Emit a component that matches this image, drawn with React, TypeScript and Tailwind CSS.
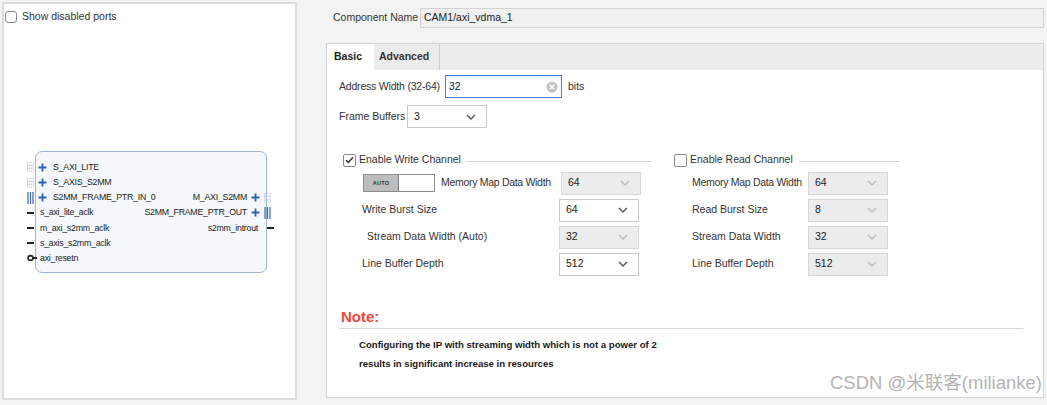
import React from "react";

const Chevron = ({ disabled }: { disabled?: boolean }) => (
  <svg width="10" height="6" viewBox="0 0 10 6" className="shrink-0">
    <path d="M1 1 L5 5 L9 1" fill="none" stroke={disabled ? "#b9b9b9" : "#555"} strokeWidth="1.4" />
  </svg>
);

const Select = ({ value, disabled, w = "w-[80px]" }: { value: string; disabled?: boolean; w?: string }) => (
  <div
    className={`${w} h-[23px] flex items-center justify-between pl-[6px] pr-[10px] border ${
      disabled ? "bg-[#ececec] border-[#d6d6d6]" : "bg-white border-[#c9c9c9]"
    }`}
  >
    <span className="text-[#222]">{value}</span>
    <Chevron disabled={disabled} />
  </div>
);

const Checkbox = ({ checked }: { checked?: boolean }) => (
  <div className="w-[13px] h-[13px] border border-[#8a8a8a] rounded-[2px] bg-white flex items-center justify-center shrink-0">
    {checked && (
      <svg width="9" height="8" viewBox="0 0 9 8">
        <path d="M1 4.2 L3.4 6.5 L8 1.2" fill="none" stroke="#333" strokeWidth="1.5" />
      </svg>
    )}
  </div>
);

const Plus = () => (
  <svg width="9" height="9" viewBox="0 0 9 9" className="shrink-0">
    <path d="M4.5 0.5 V8.5 M0.5 4.5 H8.5" stroke="#2f5fb3" strokeWidth="1.8" />
  </svg>
);

const DotMarker = ({ rows = 3 }: { rows?: number }) => (
  <svg width="7" height="10" viewBox="0 0 7 10">
    {Array.from({ length: rows }).map((_, i) => (
      <g key={i}>
        <rect x="0.5" y={0.5 + i * 3.2} width="6" height="2.4" fill="none" stroke="#a8b6cc" strokeWidth="0.8" strokeDasharray="1 1" />
      </g>
    ))}
  </svg>
);

const BusMarker = () => (
  <svg width="7" height="12" viewBox="0 0 7 12">
    <path d="M1 0 V12 M3.5 0 V12 M6 0 V12" stroke="#3a66b8" strokeWidth="1.2" />
  </svg>
);

const ClockPin = () => <div className="w-[7px] h-[2px] bg-[#222]" />;

const ResetPin = () => (
  <svg width="10" height="8" viewBox="0 0 10 8">
    <path d="M6 4 H10" stroke="#222" strokeWidth="2" />
    <circle cx="3.5" cy="4" r="2.4" fill="white" stroke="#222" strokeWidth="1.6" />
  </svg>
);

type Row = {
  left: string;
  leftBus?: boolean;
  leftPin: React.ReactNode;
  right?: string;
  rightBus?: boolean;
  rightPin?: React.ReactNode;
};

const rows: Row[] = [
  { left: "S_AXI_LITE", leftBus: true, leftPin: <DotMarker rows={3} /> },
  { left: "S_AXIS_S2MM", leftBus: true, leftPin: <DotMarker rows={3} /> },
  {
    left: "S2MM_FRAME_PTR_IN_0",
    leftBus: true,
    leftPin: <BusMarker />,
    right: "M_AXI_S2MM",
    rightBus: true,
    rightPin: <DotMarker rows={3} />,
  },
  {
    left: "s_axi_lite_aclk",
    leftPin: <ClockPin />,
    right: "S2MM_FRAME_PTR_OUT",
    rightBus: true,
    rightPin: <BusMarker />,
  },
  { left: "m_axi_s2mm_aclk", leftPin: <ClockPin />, right: "s2mm_introut", rightPin: <ClockPin /> },
  { left: "s_axis_s2mm_aclk", leftPin: <ClockPin /> },
  { left: "axi_resetn", leftPin: <ResetPin /> },
];

const Block = () => (
  <div className="ml-[31px] mt-[126px] w-[232px] rounded-[7px] border border-[#9fb5d3] bg-[#f4f8fc] pt-[8px] pb-[6px] text-[8.8px] text-[#222] tracking-[-0.25px]">
    {rows.map((r, i) => (
      <div key={i} className="relative h-[15.2px] flex items-center justify-between pr-[6px]">
        <div className="absolute left-[-9px] top-0 h-full flex items-center">{r.leftPin}</div>
        <div className={`flex items-center ${r.leftBus ? "pl-[2px] gap-[6px]" : "pl-[4px]"}`}>
          {r.leftBus && <Plus />}
          <span>{r.left}</span>
        </div>
        {r.right && (
          <div className={`flex items-center ${r.rightBus ? "gap-[4px]" : "pr-[2px]"}`}>
            <span>{r.right}</span>
            {r.rightBus && <Plus />}
          </div>
        )}
        {r.rightPin && (
          <div className={`absolute ${r.rightBus ? "right-[-5px]" : "right-[-8px]"} top-0 h-full flex items-center`}>
            {r.rightPin}
          </div>
        )}
      </div>
    ))}
  </div>
);

const AutoToggle = () => (
  <div className="w-[72px] h-[18px] border border-[#8c8c8c] flex bg-white">
    <div className="w-[35px] h-full bg-[#bdbdbd] border-r border-[#7a7a7a] flex items-center justify-center">
      <span className="text-[5.5px] font-bold text-[#333] tracking-[0.3px]">AUTO</span>
    </div>
  </div>
);

export default function App() {
  return (
    <div className="w-[1047px] h-[405px] bg-[#f3f3f3] flex font-['Liberation_Sans',Arial,sans-serif] text-[10.5px] text-[#222] overflow-hidden">
      {/* Left panel */}
      <div className="ml-[2px] mt-[2px] w-[295px] h-[398px] border-2 border-[#dcdcdc] bg-white flex flex-col">
        <div className="flex items-center gap-[5px] pl-[1px] pt-[5px]">
          <div className="w-[12px] h-[12px] border border-[#8a8a8a] rounded-[3px] bg-white" />
          <span className="text-[10.5px] text-[#333]">Show disabled ports</span>
        </div>
        <Block />
      </div>

      {/* Right area */}
      <div className="flex-1 pl-[29px] pr-[3px] flex flex-col">
        <div className="flex items-center pt-[8px] pl-[7px] h-[28px]">
          <span className="w-[87px] text-[#333]">Component Name</span>
          <div className="flex-1 h-[20px] bg-[#f0f0f0] border border-[#d3d3d3] flex items-center pl-[3px] text-[#222]">
            CAM1/axi_vdma_1
          </div>
        </div>

        <div className="mt-[15px] flex-1 mb-[7px] border border-[#d3d3d3] bg-white flex flex-col">
          {/* Tabs */}
          <div className="h-[26px] bg-[#ececec] flex items-stretch font-bold text-[10.5px]">
            <div className="w-[47px] bg-white flex items-center pl-[7px]">Basic</div>
            <div className="w-[66px] flex items-center pl-[5px] border-r border-[#d0d0d0] text-[#333]">Advanced</div>
          </div>

          <div className="pl-[12px] flex flex-col">
            {/* Address width */}
            <div className="mt-[5px] flex items-center h-[23px]">
              <span className="w-[106px] text-[#333] whitespace-nowrap tracking-[-0.2px]">Address Width (32-64)</span>
              <div className="w-[117px] h-[23px] border border-[#4a7fd0] flex items-center justify-between pl-[3px] pr-[3px]">
                <span>32</span>
                <svg width="12" height="12" viewBox="0 0 12 12">
                  <circle cx="6" cy="6" r="5.5" fill="#c4c4c4" />
                  <path d="M3.8 3.8 L8.2 8.2 M8.2 3.8 L3.8 8.2" stroke="white" strokeWidth="1.4" />
                </svg>
              </div>
              <span className="ml-[6px] text-[#333]">bits</span>
            </div>

            {/* Frame buffers */}
            <div className="mt-[7px] flex items-center h-[23px]">
              <span className="w-[68px] text-[#333]">Frame Buffers</span>
              <Select value="3" w="w-[80px]" />
            </div>

            {/* Channels */}
            <div className="mt-[25px] flex">
              {/* Write */}
              <div className="ml-[4px] w-[308px] flex flex-col">
                <div className="flex items-center h-[14px]">
                  <Checkbox checked />
                  <span className="ml-[3px] text-[#333]">Enable Write Channel</span>
                  <div className="ml-[5px] flex-1 h-px bg-[#d4d4d4] mt-[3px]" />
                </div>
                <div className="mt-[5px] flex flex-col gap-[5px]">
                  <div className="h-[22px] flex items-center">
                    <div className="ml-[20px]">
                      <AutoToggle />
                    </div>
                    <span className="ml-[6px] w-[120px] text-[#333] whitespace-nowrap tracking-[-0.3px]">Memory Map Data Width</span>
                    <Select value="64" disabled />
                  </div>
                  <div className="h-[22px] flex items-center">
                    <span className="ml-[19px] w-[197px] text-[#333]">Write Burst Size</span>
                    <Select value="64" />
                  </div>
                  <div className="h-[22px] flex items-center">
                    <span className="ml-[24px] w-[192px] text-[#333]">Stream Data Width (Auto)</span>
                    <Select value="32" disabled />
                  </div>
                  <div className="h-[22px] flex items-center">
                    <span className="ml-[19px] w-[197px] text-[#333]">Line Buffer Depth</span>
                    <Select value="512" />
                  </div>
                </div>
              </div>

              {/* Read */}
              <div className="ml-[23px] w-[225px] flex flex-col">
                <div className="flex items-center h-[14px]">
                  <Checkbox />
                  <span className="ml-[3px] text-[#333]">Enable Read Channel</span>
                  <div className="ml-[6px] flex-1 h-px bg-[#d4d4d4] mt-[3px]" />
                </div>
                <div className="mt-[5px] flex flex-col gap-[5px]">
                  <div className="h-[22px] flex items-center">
                    <span className="ml-[18px] w-[116px] text-[#333] whitespace-nowrap tracking-[-0.3px]">Memory Map Data Width</span>
                    <Select value="64" disabled />
                  </div>
                  <div className="h-[22px] flex items-center">
                    <span className="ml-[18px] w-[116px] text-[#333]">Read Burst Size</span>
                    <Select value="8" disabled />
                  </div>
                  <div className="h-[22px] flex items-center">
                    <span className="ml-[18px] w-[116px] text-[#333]">Stream Data Width</span>
                    <Select value="32" disabled />
                  </div>
                  <div className="h-[22px] flex items-center">
                    <span className="ml-[18px] w-[116px] text-[#333]">Line Buffer Depth</span>
                    <Select value="512" disabled />
                  </div>
                </div>
              </div>
            </div>

            {/* Note */}
            <div className="mt-[34px] pl-[2px] text-[15px] font-bold text-[#f2473b] leading-[16px]">Note:</div>
            <div className="mt-[3px] mr-[20px] h-px bg-[#d9d9d9]" />
            <div className="pl-[20px] mt-[6px] text-[9.6px] font-bold text-[#1a1a1a] leading-[19px]">
              <div>Configuring the IP with streaming width which is not a power of 2</div>
              <div>results in significant increase in resources</div>
            </div>
            <div className="flex justify-end pr-[1px] mt-[-1px]">
              <span className="text-[18.5px] text-[#b4b4b4] font-['Liberation_Sans','Noto_Sans_CJK_SC',sans-serif] leading-[22px]">
                CSDN @米联客(milianke)
              </span>
            </div>
          </div>
        </div>
      </div>
    </div>
  );
}
